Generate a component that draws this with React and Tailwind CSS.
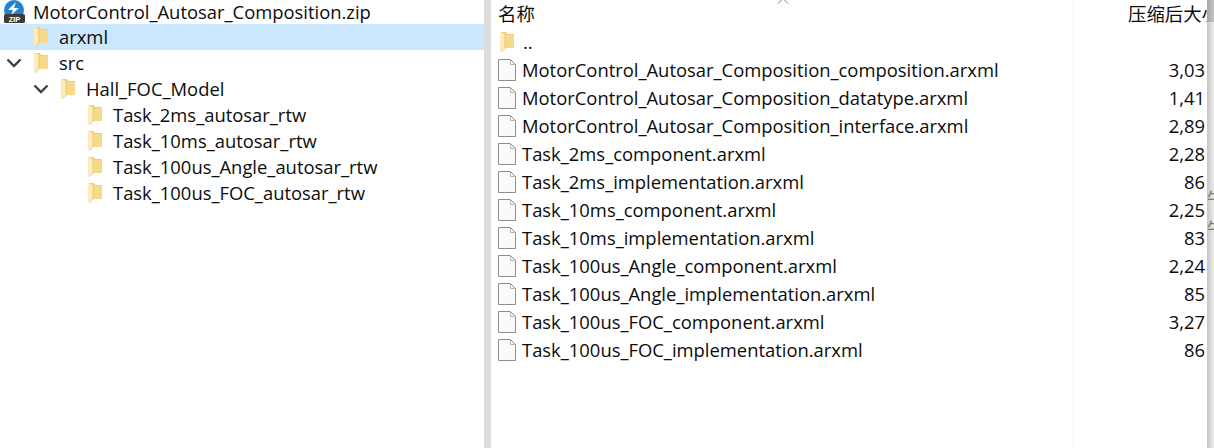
import React from 'react';

const font = 'font-["Open_Sans","Noto_Sans_CJK_SC",sans-serif]';

const treeRows = [
  { label: 'arxml', indent: 33, selected: true },
  { label: 'src', indent: 33, open: true },
  { label: 'Hall_FOC_Model', indent: 60, open: true },
  { label: 'Task_2ms_autosar_rtw', indent: 87 },
  { label: 'Task_10ms_autosar_rtw', indent: 87 },
  { label: 'Task_100us_Angle_autosar_rtw', indent: 87 },
  { label: 'Task_100us_FOC_autosar_rtw', indent: 87 },
];

const files = [
  ['MotorControl_Autosar_Composition_composition.arxml', '3,03'],
  ['MotorControl_Autosar_Composition_datatype.arxml', '1,41'],
  ['MotorControl_Autosar_Composition_interface.arxml', '2,89'],
  ['Task_2ms_component.arxml', '2,28'],
  ['Task_2ms_implementation.arxml', '86'],
  ['Task_10ms_component.arxml', '2,25'],
  ['Task_10ms_implementation.arxml', '83'],
  ['Task_100us_Angle_component.arxml', '2,24'],
  ['Task_100us_Angle_implementation.arxml', '85'],
  ['Task_100us_FOC_component.arxml', '3,27'],
  ['Task_100us_FOC_implementation.arxml', '86'],
];

const FolderIcon = () => (
  <svg width="16" height="22" viewBox="0 0 16 22" className="shrink-0">
    <path d="M1 1 H7 L8 3 H15 V17 H5 V3 Z" fill="#f3cd6c" />
    <path d="M6 4 H15 V17 H6 Z" fill="#f8d989" />
    <path d="M1 1 L6 3 V17 L2 21 L1 19 Z" fill="#fdecb9" />
    <path d="M6 3 V17 L2 21" fill="none" stroke="#e6bd5f" strokeWidth="0.7" />
  </svg>
);

const FileIcon = () => (
  <svg width="18" height="22" viewBox="0 0 18 22" className="shrink-0">
    <path d="M.5.5 H12.5 L17.5 5.5 V21.5 H.5 Z" fill="#fafafa" stroke="#8e8e8e" />
    <path d="M12.5.5 V5.5 H17.5" fill="none" stroke="#b5b5b5" />
  </svg>
);

const Chevron = () => (
  <svg width="16" height="10" viewBox="0 0 16 10" className="shrink-0">
    <path d="M1.5 1.5 L8 8 L14.5 1.5" fill="none" stroke="#404040" strokeWidth="2.4" />
  </svg>
);

const ZipIcon = () => (
  <svg width="26" height="24" viewBox="0 0 26 24" className="shrink-0">
    <circle cx="14" cy="10" r="10" fill="#1d83d4" />
    <path d="M16 2 L8 10 H13 L11 15 L19 8 H14 Z" fill="#fff" />
    <rect x="4" y="14" width="21" height="9" rx="1.5" fill="#3c3c3c" />
    <text x="14.5" y="21.5" textAnchor="middle" fontSize="7.5" fontWeight="700" fill="#fff" fontFamily="Liberation Sans, sans-serif">ZIP</text>
  </svg>
);

const App = () => {
  return (
    <div className={`${font} flex h-[448px] w-[1214px] overflow-hidden bg-white text-[18.4px] text-[#0c0c0c]`}>
      {/* tree pane */}
      <div className="w-[484px] shrink-0">
        <div className="flex h-6 items-center gap-[7px]">
          <ZipIcon />
          <span>MotorControl_Autosar_Composition.zip</span>
        </div>
        {treeRows.map((row) => (
          <div key={row.label} className={`relative flex h-[26px] items-center ${row.selected ? 'bg-[#cce8ff]' : ''}`}>
            {row.open && (
              <span className="absolute top-[8px]" style={{ left: row.indent - 27 }}>
                <Chevron />
              </span>
            )}
            <span className="flex items-center gap-[10px]" style={{ marginLeft: row.indent }}>
              <FolderIcon />
              <span>{row.label}</span>
            </span>
          </div>
        ))}
      </div>

      {/* splitter */}
      <div className="w-[7px] shrink-0 bg-[#dcdcdc]" />

      {/* file list */}
      <div className="relative min-w-0 flex-1 overflow-hidden">
        <span className="absolute left-[286px] top-[-3px] h-[6px] w-[6px]">
          <svg width="12" height="7" viewBox="0 0 12 7" className="overflow-visible">
            <path d="M1 6.5 L6 1.5 L11 6.5" fill="none" stroke="#7a7a7a" />
          </svg>
        </span>
        <div className="flex h-7 items-center">
          <span className="ml-[7px] w-[630px] shrink-0">名称</span>
          <span className="shrink-0 whitespace-nowrap">压缩后大小</span>
        </div>
        <div className="flex h-7 items-center pl-[7px]">
          <span className="ml-[1px] flex w-[16px] justify-center"><FolderIcon /></span>
          <span className="ml-[8px]">..</span>
        </div>
        {files.map(([name, size]) => (
          <div key={name} className="flex h-7 items-center">
            <span className="ml-[7px] flex w-[668px] items-center gap-[6px]">
              <FileIcon />
              <span>{name}</span>
            </span>
            <span className="w-[39px] text-right">{size}</span>
          </div>
        ))}
        {/* column divider */}
        <div className="absolute bottom-0 left-[582px] top-0 w-px bg-[#f0f4f9]" />
        {/* strip at the right edge, covers the clipped header */}
        <div className="absolute bottom-0 right-0 top-0 flex w-[7px] flex-col overflow-hidden bg-linear-to-r from-[#c6c6c6] to-[#ececec]">
          <div className="h-[22px] shrink-0 bg-linear-to-r from-[#a6a6a6] to-[#c4c4c4]" />
          <span className="mt-[167px] h-[30px] text-[16px] leading-[18px] text-[#7d7468]">牛</span>
          <span className="h-[30px] text-[16px] leading-[18px] text-[#7d7468]">牛</span>
        </div>
      </div>
    </div>
  );
};

export default App;
